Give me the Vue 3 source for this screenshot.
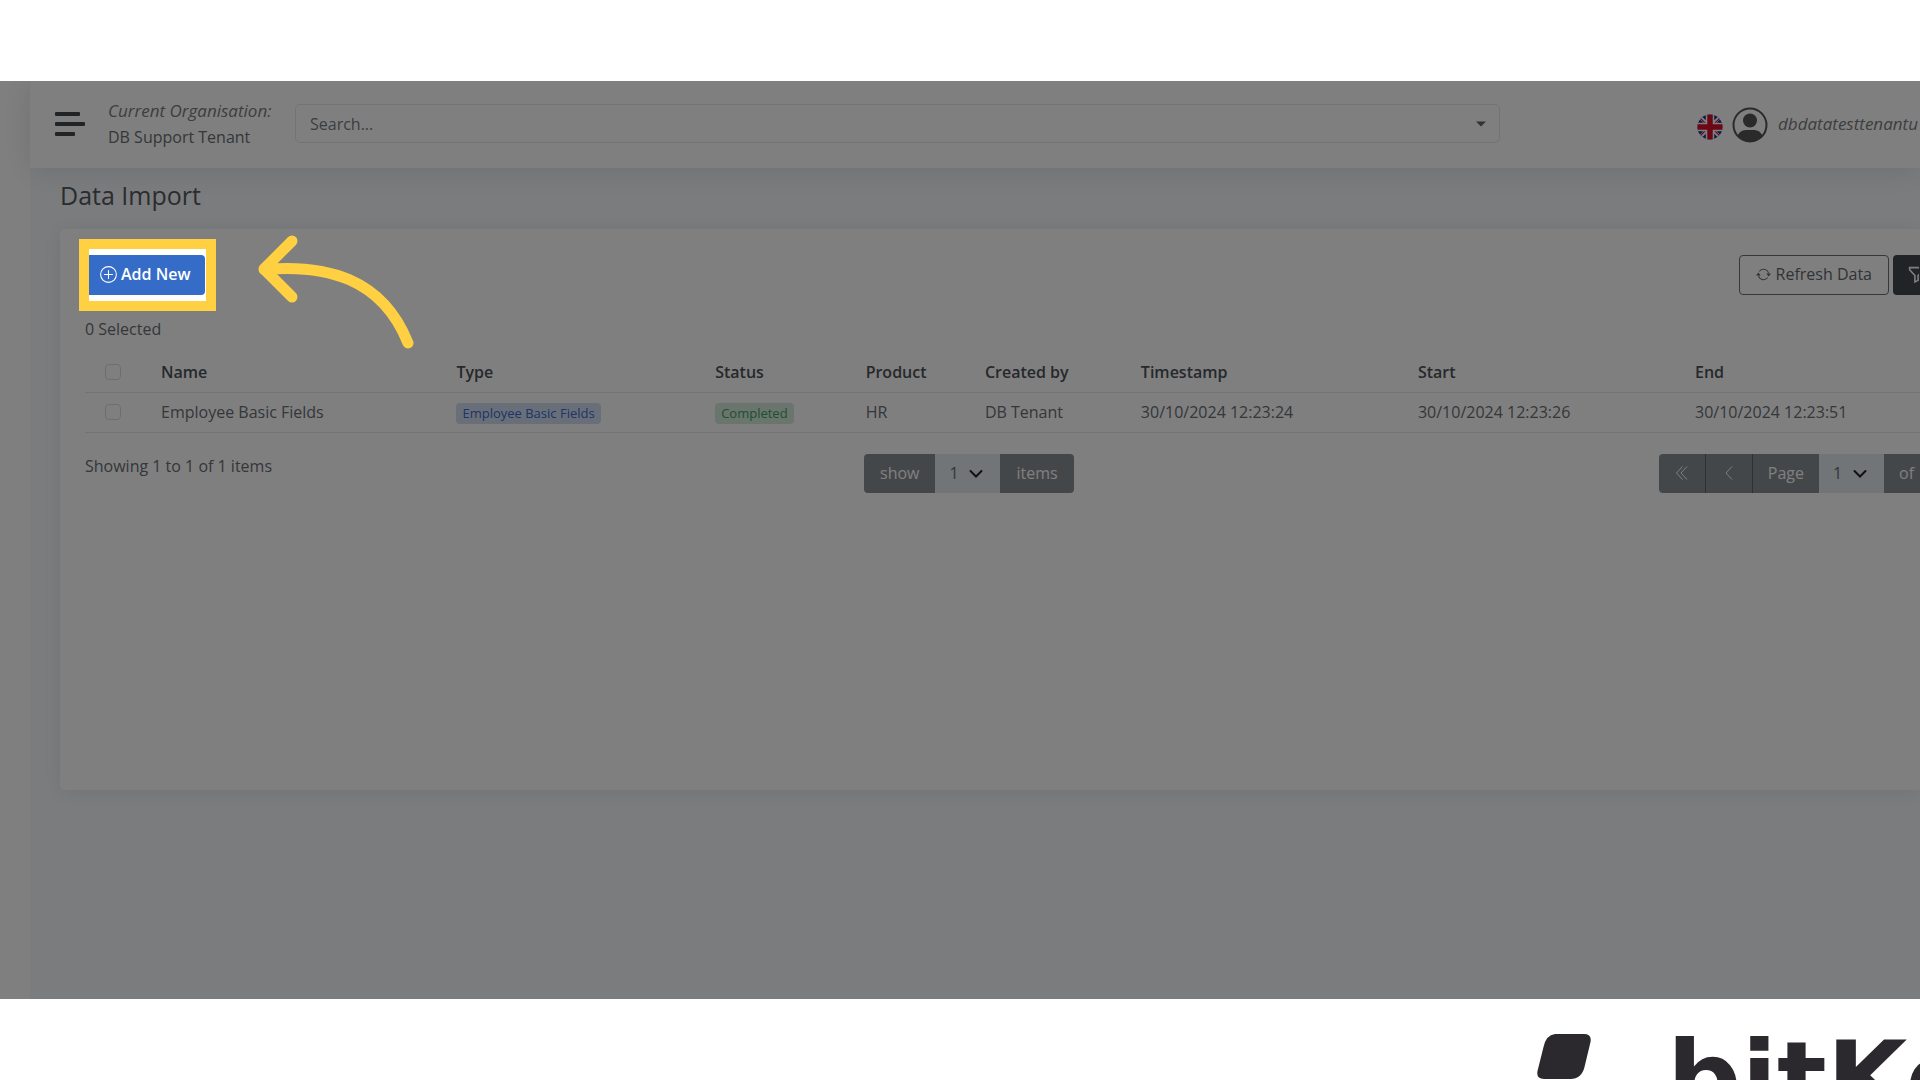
<!--
  Data Import: import list with a guided-tour spotlight on the "Add New" button.
-->
<template>
  <div class="slide">
    <div class="screen">
      <aside class="sidebar" />

      <div class="workspace">
        <header class="topbar">
          <button class="menu-btn" aria-label="Toggle menu">
            <span class="menu-btn__bar" />
            <span class="menu-btn__bar menu-btn__bar--long" />
            <span class="menu-btn__bar menu-btn__bar--short" />
          </button>
          <div class="org">
            <em class="org__label">Current Organisation:</em>
            <span>DB Support Tenant</span>
          </div>
          <div class="search">
            <input v-model="search" class="search__input" type="text" placeholder="Search..." aria-label="Search">
            <svg class="search__caret" viewBox="0 0 10 6"><path d="M0 0.5h10L5 5.5z" /></svg>
          </div>
          <div class="account">
            <svg class="account__flag" viewBox="0 0 26 26" role="img" aria-label="English">
              <defs>
                <clipPath id="flag-clip"><circle cx="13" cy="13" r="12.5" /></clipPath>
              </defs>
              <g clip-path="url(#flag-clip)">
                <rect width="26" height="26" fill="#0a3296" />
                <path d="M0 0l26 26M26 0L0 26" stroke="#fff" stroke-width="3.5" />
                <path d="M0 1l12 12M26 1L14 13M0 25l12-12M26 25L14 13" stroke="#d8102c" stroke-width="1.2" />
                <path d="M13 0v26M0 13h26" stroke="#fff" stroke-width="8.5" />
                <path d="M13 0v26M0 13h26" stroke="#d8102c" stroke-width="5.5" />
              </g>
            </svg>
            <svg class="account__avatar" viewBox="0 0 36 36">
              <defs>
                <clipPath id="avatar-clip"><circle cx="18" cy="18" r="17" /></clipPath>
              </defs>
              <circle cx="18" cy="18" r="16.5" fill="none" stroke="#555" stroke-width="2" />
              <circle cx="18" cy="13.5" r="7" fill="#555" />
              <path d="M4 36c0-9 5-13 10-13h8c5 0 10 4 10 13z" fill="#555" clip-path="url(#avatar-clip)" />
            </svg>
            <em class="account__name">dbdatatesttenantu</em>
          </div>
        </header>

        <main class="content">
          <h1 class="content__title">Data Import</h1>

          <section class="card">
            <div class="toolbar">
              <div class="tour-target">
                <button class="btn btn--primary">
                  <svg class="btn__icon" viewBox="0 0 16 16" fill="none" stroke="currentColor">
                    <circle cx="8" cy="8" r="7.4" />
                    <path d="M8 4.2v7.6M4.2 8h7.6" stroke-linecap="round" />
                  </svg>
                  Add New
                </button>
                <div class="spotlight" />
                <svg class="tour-arrow" viewBox="0 0 160 120">
                  <path d="M36 9L8 37l28 28M8 37.500C70 32 126 46 152 111" />
                </svg>
              </div>
              <div class="toolbar__right">
                <button class="btn btn--outline">
                  <svg class="btn__icon btn__icon--small" viewBox="0 0 16 16" fill="currentColor">
                    <path d="M11.534 7h3.932a.25.25 0 0 1 .192.410l-1.966 2.360a.25.25 0 0 1-.384 0l-1.966-2.360a.25.25 0 0 1 .192-.410zm-11 2h3.932a.25.25 0 0 0 .192-.410L2.692 6.230a.25.25 0 0 0-.384 0L.342 8.590A.25.25 0 0 0 .534 9z" />
                    <path d="M8 3c-1.552 0-2.940.707-3.857 1.818a.5.5 0 1 1-.771-.636A6.002 6.002 0 0 1 13.917 7H12.900A5.002 5.002 0 0 0 8 3zM3.100 9a5.002 5.002 0 0 0 8.757 2.182.5.5 0 1 1 .771.636A6.002 6.002 0 0 1 2.083 9H3.100z" />
                  </svg>
                  Refresh Data
                </button>
                <button class="btn btn--dark" aria-label="Filter">
                  <svg class="btn__icon" viewBox="0 0 16 16" fill="none" stroke="currentColor" stroke-width="1.5">
                    <path d="M1.500 1.500h13v2L9.500 9v4.500l-3 1.500V9l-5-5.500z" />
                  </svg>
                </button>
              </div>
            </div>

            <p class="selected">0 Selected</p>

            <table class="grid">
              <colgroup>
                <col class="grid__check-col">
                <col v-for="col in columns" :key="col.key" :style="{ width: col.width }">
              </colgroup>
              <thead>
                <tr>
                  <th class="grid__check"><input type="checkbox" aria-label="Select all"></th>
                  <th v-for="col in columns" :key="col.key">{{ col.label }}</th>
                </tr>
              </thead>
              <tbody>
                <tr v-for="row in rows" :key="row.name">
                  <td class="grid__check"><input type="checkbox" :aria-label="`Select ${row.name}`"></td>
                  <td v-for="col in columns" :key="col.key">
                    <span v-if="col.badge" class="badge" :class="`badge--${col.badge}`">{{ row[col.key] }}</span>
                    <template v-else>{{ row[col.key] }}</template>
                  </td>
                </tr>
              </tbody>
            </table>

            <div class="pager">
              <p class="pager__summary">Showing 1 to 1 of 1 items</p>
              <div class="pager__group pager__group--size">
                <span class="pager__cell">show</span>
                <div class="pager__select">
                  <select v-model="pageSize" aria-label="Items per page"><option>1</option></select>
                  <svg viewBox="0 0 14 10"><path d="M1.500 2L7 7.500 12.500 2" /></svg>
                </div>
                <span class="pager__cell">items</span>
              </div>
              <div class="pager__group pager__group--nav">
                <button class="pager__cell pager__cell--nav" aria-label="First page">
                  <svg viewBox="0 0 16 16"><path d="M8.500 1.500L2.500 8l6 6.500M13 1.500L7 8l6 6.500" /></svg>
                </button>
                <button class="pager__cell pager__cell--nav" aria-label="Previous page">
                  <svg viewBox="0 0 16 16"><path d="M11 1.500L5 8l6 6.500" /></svg>
                </button>
                <span class="pager__cell">Page</span>
                <div class="pager__select">
                  <select v-model="page" aria-label="Page"><option>1</option></select>
                  <svg viewBox="0 0 14 10"><path d="M1.500 2L7 7.500 12.500 2" /></svg>
                </div>
                <span class="pager__cell">of</span>
              </div>
            </div>
          </section>
        </main>
      </div>
    </div>

    <footer class="brand">
      <svg class="brand__mark" viewBox="0 0 54 46">
        <path d="M18 0h29q8 0 6.500 8l-6 25q-3 12-14 12H7q-8 0-6.500-8l6-24Q9 1 18 0z" />
      </svg>
      <span class="brand__name">bitKe</span>
    </footer>
  </div>
</template>

<script setup>
import { ref } from 'vue'

const search = ref('')
const pageSize = ref('1')
const page = ref('1')

const columns = [
  { key: 'name', label: 'Name', width: '16.1%' },
  { key: 'type', label: 'Type', width: '14.1%', badge: 'blue' },
  { key: 'status', label: 'Status', width: '8.2%', badge: 'green' },
  { key: 'product', label: 'Product', width: '6.5%' },
  { key: 'createdBy', label: 'Created by', width: '8.5%' },
  { key: 'timestamp', label: 'Timestamp', width: '15.1%' },
  { key: 'start', label: 'Start', width: '15.1%' },
  { key: 'end', label: 'End', width: 'auto' },
]

const rows = [
  {
    name: 'Employee Basic Fields',
    type: 'Employee Basic Fields',
    status: 'Completed',
    product: 'HR',
    createdBy: 'DB Tenant',
    timestamp: '30/10/2024 12:23:24',
    start: '30/10/2024 12:23:26',
    end: '30/10/2024 12:23:51',
  },
]
</script>

<style>
body { margin: 0; background: #fff; }
</style>

<style scoped>
* { box-sizing: border-box; }

.slide {
  display: grid;
  grid-template-rows: 81px 1fr 81px;
  height: 100vh;
  overflow: hidden;
  font: 400 16px/24px "Open Sans", sans-serif;
  color: #6a6e74;
}

button, input, select { font: inherit; color: inherit; }
button { cursor: pointer; }
p, h1 { margin: 0; }

/* ── Screen ──────────────────────────────────────────────────── */
.screen {
  grid-row: 2;
  display: flex;
  overflow: hidden;
  background: #fff;
}
.sidebar { flex: none; width: 30px; }
.workspace {
  flex: 1;
  min-width: 0;
  background: #f7f9fc;
}

/* ── Top bar ─────────────────────────────────────────────────── */
.topbar {
  display: flex;
  align-items: center;
  height: 87px;
  padding: 0 0 2px 25px;
  background: #fff;
  box-shadow: 0 2px 28px rgba(58, 59, 69, 0.15);
  white-space: nowrap;
}
.menu-btn {
  display: flex;
  flex-direction: column;
  gap: 6px;
  width: 30px;
  margin-right: 23px;
  padding: 0;
  border: 0;
  background: none;
}
.menu-btn__bar { width: 25px; height: 4px; border-radius: 1px; background: #43494f; }
.menu-btn__bar--long { width: 30px; }
.menu-btn__bar--short { width: 20px; }

.org { display: flex; flex-direction: column; width: 187px; line-height: 26px; }
.org__label { color: #787c80; font-size: 17px; }

.search { position: relative; flex: 1; }
.search__input {
  display: block;
  width: 100%;
  height: 39px;
  padding: 0 14px;
  border: 1px solid #e3e6ea;
  border-radius: 5px;
  background: #fff;
}
.search__input::placeholder { color: #787c80; opacity: 1; }
.search__caret {
  position: absolute;
  top: 17px;
  right: 14px;
  width: 10px;
  height: 6px;
  fill: #666;
}

.account {
  display: flex;
  align-items: center;
  width: 420px;
  padding-left: 197px;
}
.account__flag { width: 26px; height: 26px; margin: 6px 9px 0 0; }
.account__avatar { width: 36px; height: 36px; margin: 2px 10px 0 0; }
.account__name { color: #787c80; font-size: 17px; }

/* ── Content ─────────────────────────────────────────────────── */
.content { padding: 10px 0 0 30px; }
.content__title {
  font-size: 25px;
  font-weight: 400;
  line-height: 34px;
  color: #555a60;
}
.card {
  min-height: 561px;
  margin-top: 17px;
  padding: 26px 0 0 25px;
  border-radius: 5px 0 0 5px;
  background: #fff;
  box-shadow: 0 2px 20px rgba(58, 59, 69, 0.1);
}

/* ── Toolbar ─────────────────────────────────────────────────── */
.toolbar { display: flex; justify-content: space-between; }
.toolbar__right { display: flex; gap: 4px; }
.btn {
  display: flex;
  align-items: center;
  gap: 4px;
  height: 40px;
  padding: 0 14px 2px;
  border: 1px solid transparent;
  border-radius: 4px;
  white-space: nowrap;
}
.btn__icon { width: 17px; height: 17px; }
.btn__icon--small { width: 15px; height: 15px; }
.btn--primary { background: #356cc8; color: #fff; font-weight: 600; }
.btn--outline {
  gap: 5px;
  padding: 0 16px 2px;
  border-color: #6c7075;
  background: none;
  color: #62676d;
}
.btn--dark {
  width: 27px;
  padding-right: 0;
  border-radius: 4px 0 0 4px;
  background: #43494f;
  color: #fff;
  overflow: hidden;
}
.btn--dark .btn__icon { flex: none; }

/* ── Tour spotlight ──────────────────────────────────────────── */
.tour-target { position: relative; z-index: 10; }
.spotlight {
  position: absolute;
  inset: -16px -11px -16px -6px;
  border: 10px solid #ffd042;
  box-shadow: 0 0 0 3000px rgba(0, 0, 0, 0.5);
  pointer-events: none;
}
.tour-arrow {
  position: absolute;
  top: -23px;
  left: 171px;
  width: 160px;
  height: 120px;
  fill: none;
  stroke: #ffd042;
  stroke-width: 11;
  stroke-linecap: round;
  stroke-linejoin: round;
  pointer-events: none;
}

/* ── Table ───────────────────────────────────────────────────── */
.selected { margin: 22px 0 11px; }
.grid {
  width: 100%;
  table-layout: fixed;
  border-collapse: collapse;
}
.grid__check-col { width: 66px; }
.grid th, .grid td {
  height: 40px;
  padding: 0 10px;
  border-bottom: 1px solid #e3e6f0;
  text-align: left;
  white-space: nowrap;
}
.grid th { font-weight: 600; color: #4d5258; }
.grid .grid__check { padding-left: 20px; }
.grid input {
  display: block;
  appearance: none;
  width: 16px;
  height: 16px;
  margin: 0;
  border: 1px solid #d8dbe0;
  border-radius: 4px;
}
.badge {
  display: inline-block;
  padding: 0 6px;
  border-radius: 4px;
  font-size: 13px;
  line-height: 21px;
  vertical-align: middle;
}
.badge--blue { background: #d3def2; color: #3a6ad0; }
.badge--green { background: #d5eadc; color: #3aa25f; }

/* ── Pager ───────────────────────────────────────────────────── */
.pager {
  display: grid;
  grid-template-columns: 779px 1fr auto;
  align-items: start;
  margin-top: 21px;
}
.pager__group {
  display: flex;
  width: max-content;
  height: 39px;
  border-radius: 4px;
  overflow: hidden;
}
.pager__group--nav { border-radius: 4px 0 0 4px; }
.pager__cell {
  display: flex;
  align-items: center;
  padding: 0 15px;
  border: 0;
  background: #888e92;
  color: #fff;
}
.pager__group--size .pager__cell { padding: 0 16px; }
.pager__cell--nav { border-right: 1px solid #5c6266; }
.pager__cell svg { width: 16px; height: 16px; fill: none; stroke: currentColor; }
.pager__group--nav > .pager__cell:last-child { width: 36px; padding-right: 0; }
.pager__select { position: relative; width: 65px; }
.pager__select select {
  width: 100%;
  height: 100%;
  padding: 0 14px;
  border: 0;
  border-radius: 0;
  appearance: none;
  background: #e2eaf0;
}
.pager__select svg {
  position: absolute;
  top: 15px;
  right: 17px;
  width: 14px;
  height: 10px;
  fill: none;
  stroke: #222;
  stroke-width: 2;
  stroke-linecap: round;
  pointer-events: none;
}

/* ── Brand ───────────────────────────────────────────────────── */
.brand {
  grid-row: 3;
  display: flex;
  align-items: flex-start;
  justify-content: flex-end;
  overflow: hidden;
  color: #2b292d;
}
.brand__mark {
  flex: none;
  width: 54px;
  height: 46px;
  margin: 35px 76px 0 0;
  fill: currentColor;
}
.brand__name {
  flex: none;
  width: 253px;
  padding-top: 20px;
  font: 700 104px/120px "DejaVu Sans", sans-serif;
}
</style>
